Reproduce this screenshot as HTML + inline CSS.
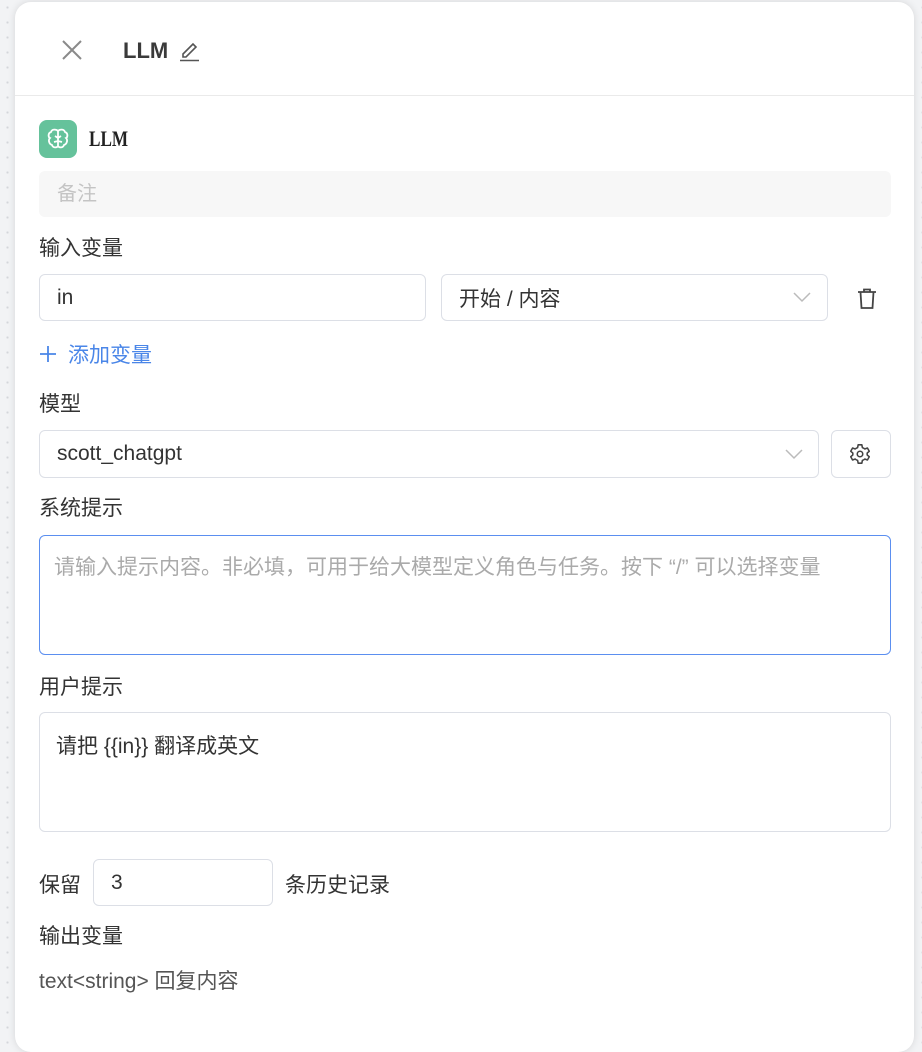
<!DOCTYPE html>
<html><head><meta charset="utf-8"><style>
*{box-sizing:border-box;margin:0;padding:0}
body{width:922px;height:1040px;overflow:hidden;background:#f2f3f5;background-image:radial-gradient(#d4d6da 1px,transparent 1.2px);background-size:15px 15px;font-family:"Liberation Sans","Noto Sans CJK SC",sans-serif;color:#333;position:relative}
.panel{position:absolute;left:15px;top:2px;width:899px;height:1050px;background:#fff;border-radius:16px;box-shadow:0 0 8px rgba(0,0,0,.12)}
.abs{position:absolute;line-height:1.2}
.lbl{font-size:21px;color:#333}
.box{position:absolute;border:1px solid #dcdfe6;border-radius:6px;background:#fff;font-size:21px;color:#333;padding-left:17px;display:flex;align-items:center}
</style></head><body>
<div class="panel">
<svg class="abs" style="left:46px;top:37px" width="22" height="22" viewBox="0 0 22 22"><path d="M2 2L20 20M20 2L2 20" stroke="#8a8a8a" stroke-width="2"/></svg>
<div class="abs" style="left:108px;top:36px;font-size:22px;font-weight:bold;color:#3a3a3a">LLM</div>
<svg class="abs" style="left:164px;top:38px" width="22" height="22" viewBox="0 0 22 22"><path d="M4 14L14 4L17 7L7 17H4Z" fill="none" stroke="#555" stroke-width="1.6"/><path d="M1 20.5H20" stroke="#555" stroke-width="1.6"/></svg>
<div class="abs" style="left:0;top:93px;width:899px;height:1px;background:#eaeaea"></div>
<div class="abs" style="left:24px;top:118px;width:38px;height:38px;border-radius:8px;background:#65c29b"></div>
<svg class="abs" style="left:29px;top:123px" width="28" height="28" viewBox="0 0 28 28"><path d="M14 6C12 4 8 4 7 7C4 8 4 12 6 13C4 15 5 19 8 20C9 23 13 23 14 21C15 23 19 23 20 20C23 19 24 15 22 13C24 12 24 8 21 7C20 4 16 4 14 6Z M14 6V21 M14 13L11 11M14 13L17 11M14 16L10 17M14 16L18 17" fill="none" stroke="#fff" stroke-width="1.8"/></svg>
<div class="abs" style="left:74px;top:124px;font-family:'Liberation Serif',serif;font-size:22px;font-weight:bold;color:#222;transform:scaleX(0.78);transform-origin:left">LLM</div>
<div class="abs" style="left:24px;top:169px;width:852px;height:46px;background:#f7f7f7;border-radius:6px;font-size:20px;color:#c4c4c4;padding:11px 18px">备注</div>
<div class="abs lbl" style="left:24px;top:234px">输入变量</div>
<div class="box" style="left:24px;top:272px;width:387px;height:47px">in</div>
<div class="box" style="left:426px;top:272px;width:387px;height:47px">开始 / 内容</div>
<svg class="abs" style="left:778px;top:289px" width="18" height="12"><path d="M1 2L9 10L17 2" fill="none" stroke="#bbb" stroke-width="1.5"/></svg>
<svg class="abs" style="left:842px;top:286px" width="20" height="22" viewBox="0 0 20 22"><path d="M1 4H19M7 4V1.5H13V4M3.5 4L4.5 20H15.5L16.5 4" fill="none" stroke="#444" stroke-width="1.8"/></svg>
<svg class="abs" style="left:24px;top:343px" width="18" height="18"><path d="M9 1V17M1 9H17" stroke="#4a86e8" stroke-width="1.8"/></svg>
<div class="abs" style="left:53px;top:341px;font-size:21px;color:#4a86e8">添加变量</div>
<div class="abs lbl" style="left:24px;top:390px">模型</div>
<div class="box" style="left:24px;top:428px;width:780px;height:48px">scott_chatgpt</div>
<svg class="abs" style="left:770px;top:446px" width="18" height="12"><path d="M1 2L9 10L17 2" fill="none" stroke="#bbb" stroke-width="1.5"/></svg>
<div class="box" style="left:816px;top:428px;width:60px;height:48px;padding:0"></div>
<svg class="abs" style="left:834px;top:441px" width="22" height="22" viewBox="0 0 24 24"><path d="M10 2H14L14.6 5A7 7 0 0 1 17.2 6.5L20.1 5.5L22.1 9L19.8 11A7 7 0 0 1 19.8 13L22.1 15L20.1 18.5L17.2 17.5A7 7 0 0 1 14.6 19L14 22H10L9.4 19A7 7 0 0 1 6.8 17.5L3.9 18.5L1.9 15L4.2 13A7 7 0 0 1 4.2 11L1.9 9L3.9 5.5L6.8 6.5A7 7 0 0 1 9.4 5Z" fill="none" stroke="#444" stroke-width="1.7" stroke-linejoin="round"/><circle cx="12" cy="12" r="3" fill="none" stroke="#444" stroke-width="1.7"/></svg>
<div class="abs lbl" style="left:24px;top:494px">系统提示</div>
<div class="abs" style="left:24px;top:533px;width:852px;height:120px;border:1px solid #5b8ff0;border-radius:6px;font-size:21px;color:#aaa;padding:19px 14px;white-space:nowrap">请输入提示内容。非必填，可用于给大模型定义角色与任务。按下 “/” 可以选择变量</div>
<div class="abs lbl" style="left:24px;top:673px">用户提示</div>
<div class="abs" style="left:24px;top:710px;width:852px;height:120px;border:1px solid #dcdfe6;border-radius:6px;font-size:21px;color:#333;padding:21px 16px">请把 {{in}} 翻译成英文</div>
<div class="abs lbl" style="left:24px;top:871px">保留</div>
<div class="box" style="left:78px;top:857px;width:180px;height:47px">3</div>
<div class="abs lbl" style="left:270px;top:871px">条历史记录</div>
<div class="abs lbl" style="left:24px;top:922px">输出变量</div>
<div class="abs" style="left:24px;top:967px;font-size:21px;color:#555">text&lt;string&gt; 回复内容</div>
</div>
</body></html>
